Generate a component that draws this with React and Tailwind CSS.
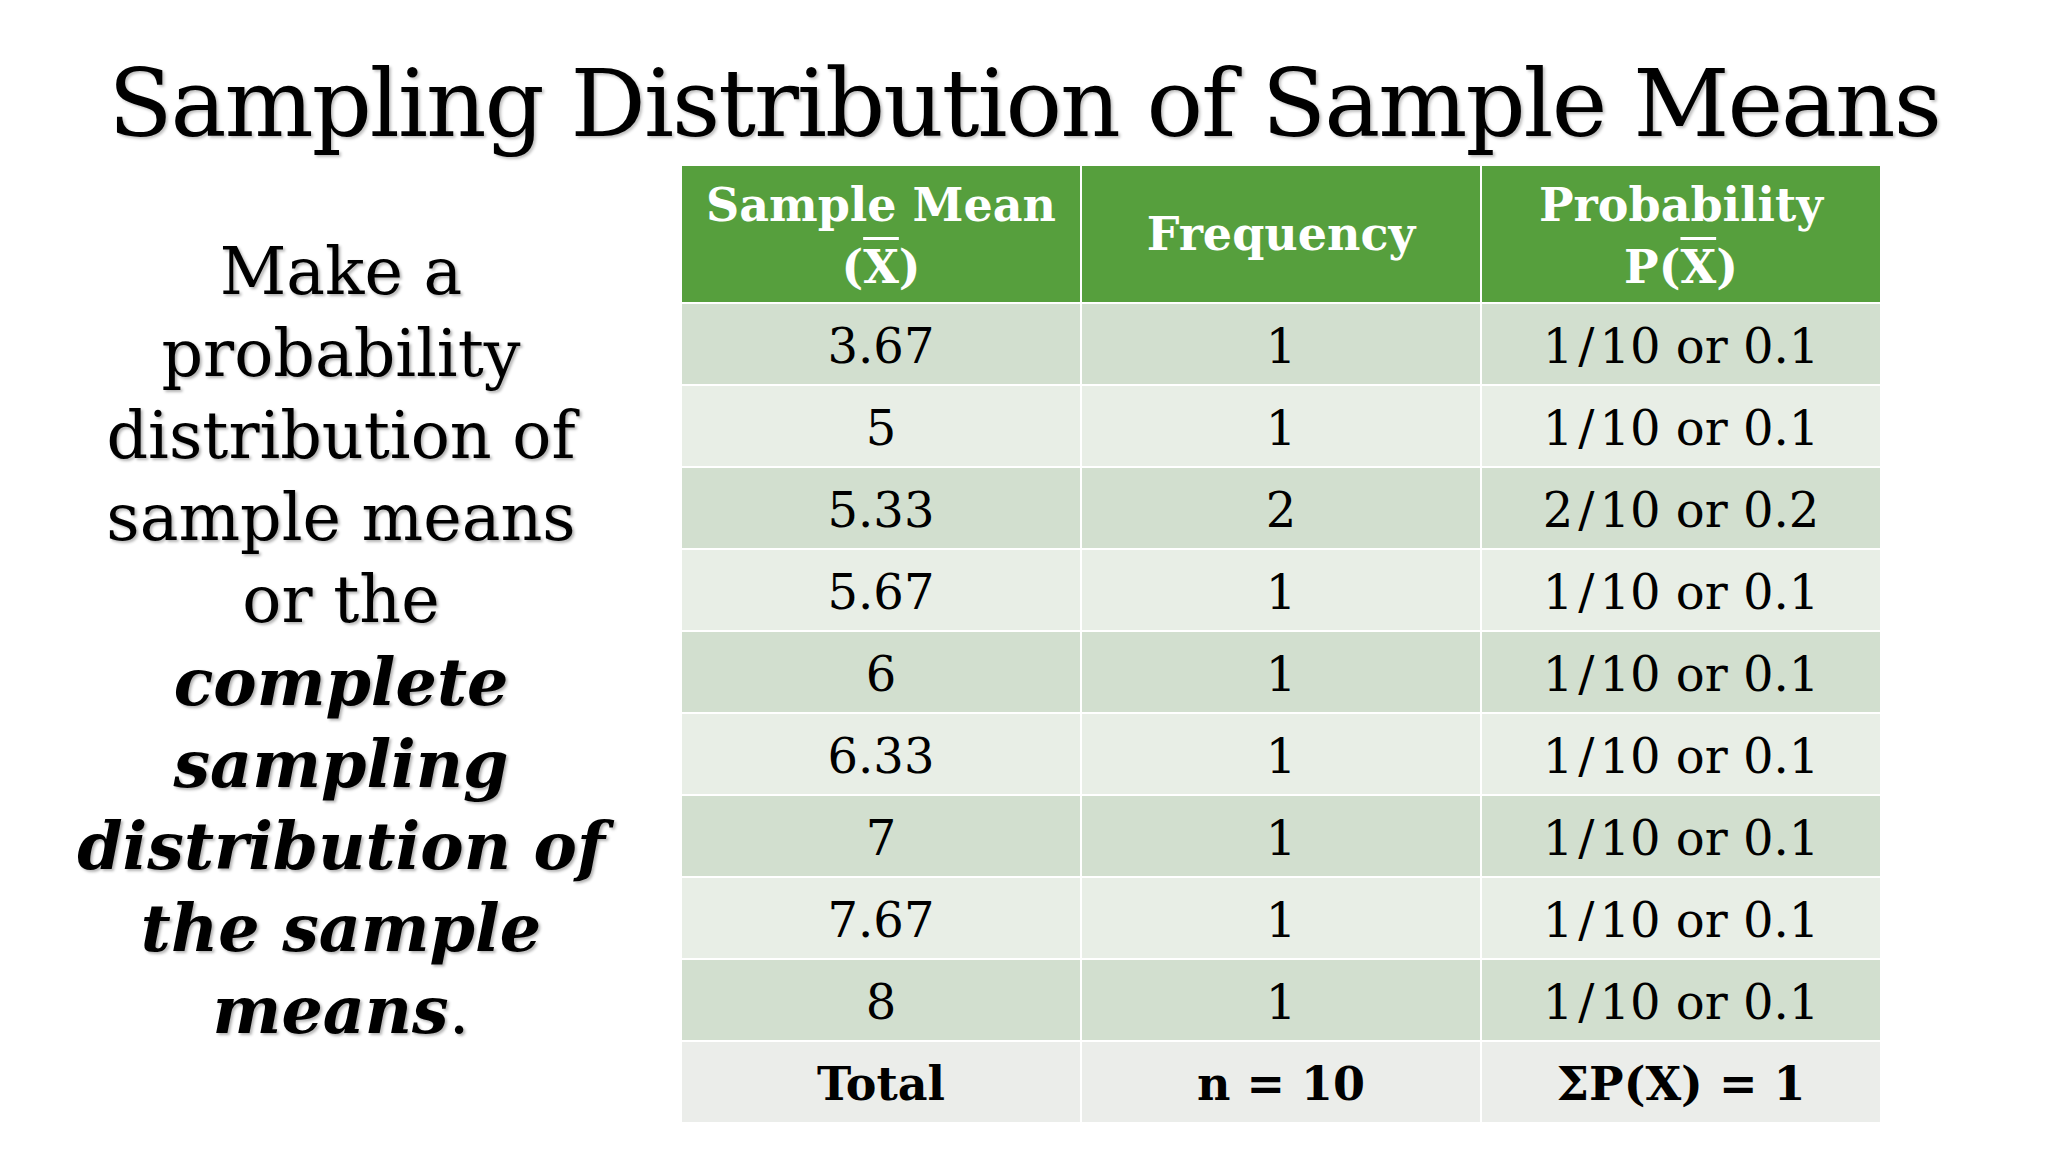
const rows = [
  ['3.67', '1', '1/10 or 0.1'],
  ['5', '1', '1/10 or 0.1'],
  ['5.33', '2', '2/10 or 0.2'],
  ['5.67', '1', '1/10 or 0.1'],
  ['6', '1', '1/10 or 0.1'],
  ['6.33', '1', '1/10 or 0.1'],
  ['7', '1', '1/10 or 0.1'],
  ['7.67', '1', '1/10 or 0.1'],
  ['8', '1', '1/10 or 0.1'],
]

const serif = "font-['DejaVu_Serif','Liberation_Serif',serif]"

function Xbar() {
  return <span className="overline decoration-[3px]">X</span>
}

// spaced slash like the slide's Bookman face
function Cell({ text }) {
  if (!text.includes('/')) return text
  const [a, b] = text.split('/')
  return (
    <>
      {a}
      <span className="mx-[5px]">/</span>
      {b}
    </>
  )
}

export default function App() {
  return (
    <div className={`flex h-[1152px] w-[2048px] flex-col bg-white text-black ${serif}`}>
      <h1 className="h-[166px] pt-[57px] text-center text-[94px] leading-none font-normal tracking-[-2px] [text-shadow:2px_2px_3px_rgba(0,0,0,0.25)]">
        Sampling Distribution of Sample Means
      </h1>

      <div className="flex">
        <div className="w-[682px] pt-[65px] text-center text-[65px] leading-[82px] [text-shadow:2px_2px_3px_rgba(0,0,0,0.3)]">
          <p>Make a</p>
          <p>probability</p>
          <p>distribution of</p>
          <p>sample means</p>
          <p>or the</p>
          <p className="font-bold italic">complete</p>
          <p className="font-bold italic">sampling</p>
          <p className="font-bold italic">distribution of</p>
          <p className="font-bold italic">the sample</p>
          <p><span className="font-bold italic">means</span>.</p>
        </div>

        <div className="grid w-[1198px] grid-cols-[398px_398px_398px] gap-[2px] bg-white">
          <div className="flex h-[136px] flex-col items-center justify-center bg-[#569f3d] pt-[4px] text-[46px] leading-[62px] font-bold text-white">
            <span>Sample Mean</span>
            <span>(<Xbar />)</span>
          </div>
          <div className="flex h-[136px] items-center justify-center bg-[#569f3d] text-[46px] leading-[60px] font-bold text-white">
            Frequency
          </div>
          <div className="flex h-[136px] flex-col items-center justify-center bg-[#569f3d] pt-[4px] text-[46px] leading-[62px] font-bold text-white">
            <span>Probability</span>
            <span>P(<Xbar />)</span>
          </div>

          {rows.map((r, i) =>
            r.map((cell, j) => (
              <div
                key={`${i}-${j}`}
                className={`flex h-[80px] items-center justify-center pt-[4px] text-[48px] ${i % 2 === 0 ? 'bg-[#d2dfcf]' : 'bg-[#e8eee6]'}`}
              >
                <Cell text={cell} />
              </div>
            ))
          )}

          <div className="flex h-[80px] items-center justify-center bg-[#ebedea] pt-[4px] text-[46px] font-bold">Total</div>
          <div className="flex h-[80px] items-center justify-center bg-[#ebedea] pt-[4px] text-[46px] font-bold">n = 10</div>
          <div className="flex h-[80px] items-center justify-center bg-[#ebedea] pt-[4px] text-[46px] font-bold">ΣP(X) = 1</div>
        </div>
      </div>
    </div>
  )
}
